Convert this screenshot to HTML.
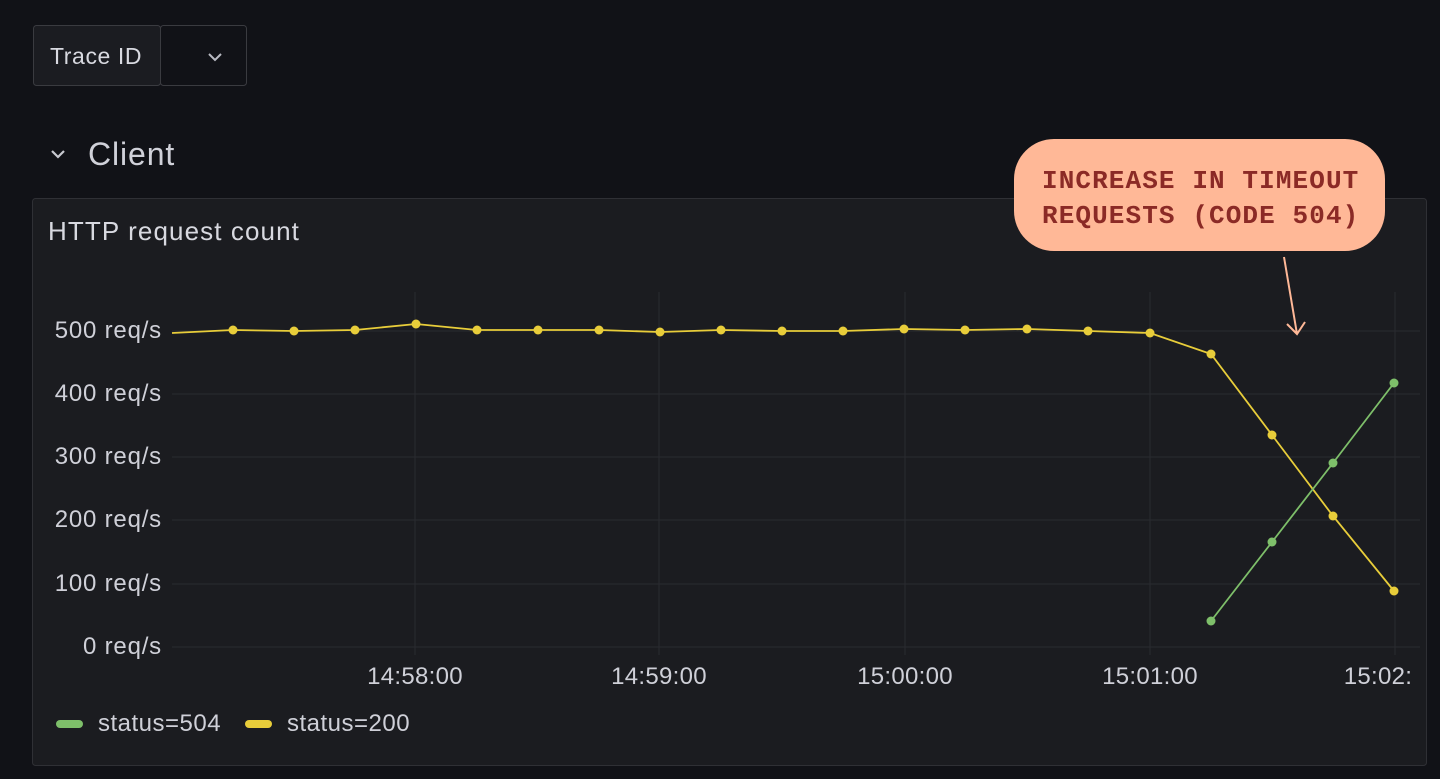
<!DOCTYPE html>
<html><head><meta charset="utf-8"><style>
html,body{margin:0;padding:0;background:#111217;width:1440px;height:779px;overflow:hidden;font-family:"Liberation Sans",sans-serif;}
</style></head><body>
<svg width="1440" height="779" xmlns="http://www.w3.org/2000/svg" style="display:block">
<rect width="1440" height="779" fill="#111217"/>
<rect x="33.5" y="25.5" width="127" height="60" rx="3" fill="#1b1c21" stroke="#3a3b40"/>
<rect x="160.5" y="25.5" width="86" height="60" rx="3" fill="#111217" stroke="#3a3b40"/>
<text x="50" y="64" font-size="23" fill="#d8d9e0" letter-spacing="0.6">Trace ID</text>
<path d="M209 54 l6 6 l6 -6" fill="none" stroke="#b8bac2" stroke-width="2"/>
<path d="M52 151 l6 6 l6 -6" fill="none" stroke="#c8c9d0" stroke-width="2.2"/>
<text x="88" y="165" font-size="32" fill="#d0d1d9" letter-spacing="0.9">Client</text>
<rect x="32.5" y="198.5" width="1394" height="567" rx="3" fill="#1b1c20" stroke="#2f3035"/>
<text x="48" y="240" font-size="26" fill="#d8d9e0" letter-spacing="1.1">HTTP request count</text>
<g stroke="#2a2b30" stroke-width="1">
<line x1="172" y1="331" x2="1420" y2="331"/><line x1="172" y1="394" x2="1420" y2="394"/>
<line x1="172" y1="457" x2="1420" y2="457"/><line x1="172" y1="520" x2="1420" y2="520"/>
<line x1="172" y1="584" x2="1420" y2="584"/><line x1="172" y1="647" x2="1420" y2="647"/>
<line x1="415" y1="292" x2="415" y2="655"/><line x1="659" y1="292" x2="659" y2="655"/>
<line x1="905" y1="292" x2="905" y2="655"/><line x1="1150" y1="292" x2="1150" y2="655"/>
<line x1="1395" y1="292" x2="1395" y2="655"/>
</g>
<g font-size="24" fill="#cfd0d8" text-anchor="end" letter-spacing="0.8">
<text x="162" y="338">500 req/s</text><text x="162" y="401">400 req/s</text>
<text x="162" y="464">300 req/s</text><text x="162" y="527">200 req/s</text>
<text x="162" y="591">100 req/s</text><text x="162" y="654">0 req/s</text>
</g>
<g font-size="24" fill="#cfd0d8" text-anchor="middle" letter-spacing="0.3">
<text x="415" y="684">14:58:00</text><text x="659" y="684">14:59:00</text>
<text x="905" y="684">15:00:00</text><text x="1150" y="684">15:01:00</text>
<text x="1378" y="684">15:02:</text>
</g>
<polyline fill="none" stroke="#e8cd3a" stroke-width="1.8" points="172,333 233,330 294,331 355,330 416,324 477,330 538,330 599,330 660,332 721,330 782,331 843,331 904,329 965,330 1027,329 1088,331 1150,333 1211,354 1272,435 1333,516 1394,591"/>
<g fill="#e8cd3a">
<circle cx="233" cy="330" r="4.5"/><circle cx="294" cy="331" r="4.5"/><circle cx="355" cy="330" r="4.5"/><circle cx="416" cy="324" r="4.5"/><circle cx="477" cy="330" r="4.5"/><circle cx="538" cy="330" r="4.5"/><circle cx="599" cy="330" r="4.5"/><circle cx="660" cy="332" r="4.5"/><circle cx="721" cy="330" r="4.5"/><circle cx="782" cy="331" r="4.5"/><circle cx="843" cy="331" r="4.5"/><circle cx="904" cy="329" r="4.5"/><circle cx="965" cy="330" r="4.5"/><circle cx="1027" cy="329" r="4.5"/><circle cx="1088" cy="331" r="4.5"/><circle cx="1150" cy="333" r="4.5"/><circle cx="1211" cy="354" r="4.5"/><circle cx="1272" cy="435" r="4.5"/><circle cx="1333" cy="516" r="4.5"/><circle cx="1394" cy="591" r="4.5"/>
</g>
<polyline fill="none" stroke="#7ebf6a" stroke-width="1.8" points="1211,621 1272,542 1333,463 1394,383"/>
<g fill="#7ebf6a"><circle cx="1211" cy="621" r="4.5"/><circle cx="1272" cy="542" r="4.5"/><circle cx="1333" cy="463" r="4.5"/><circle cx="1394" cy="383" r="4.5"/></g>
<rect x="56" y="720" width="27" height="8" rx="4" fill="#7ebf6a"/>
<text x="98" y="731" font-size="24" fill="#cfd0d8" letter-spacing="0.5">status=504</text>
<rect x="245" y="720" width="27" height="8" rx="4" fill="#e8cd3a"/>
<text x="287" y="731" font-size="24" fill="#cfd0d8" letter-spacing="0.5">status=200</text>
<rect x="1014" y="139" width="371" height="112" rx="40" fill="#ffb897"/>
<text x="1042" y="188" font-family="Liberation Mono,monospace" font-size="26" fill="#8b2a26" font-weight="bold" letter-spacing="1.1">INCREASE IN TIMEOUT</text>
<text x="1042" y="223" font-family="Liberation Mono,monospace" font-size="26" fill="#8b2a26" font-weight="bold" letter-spacing="1.1">REQUESTS (CODE 504)</text>
<path d="M1284 257 L1297 334 M1287 324 l10 10 l8 -12" fill="none" stroke="#ffb897" stroke-width="2"/>
</svg>
</body></html>
